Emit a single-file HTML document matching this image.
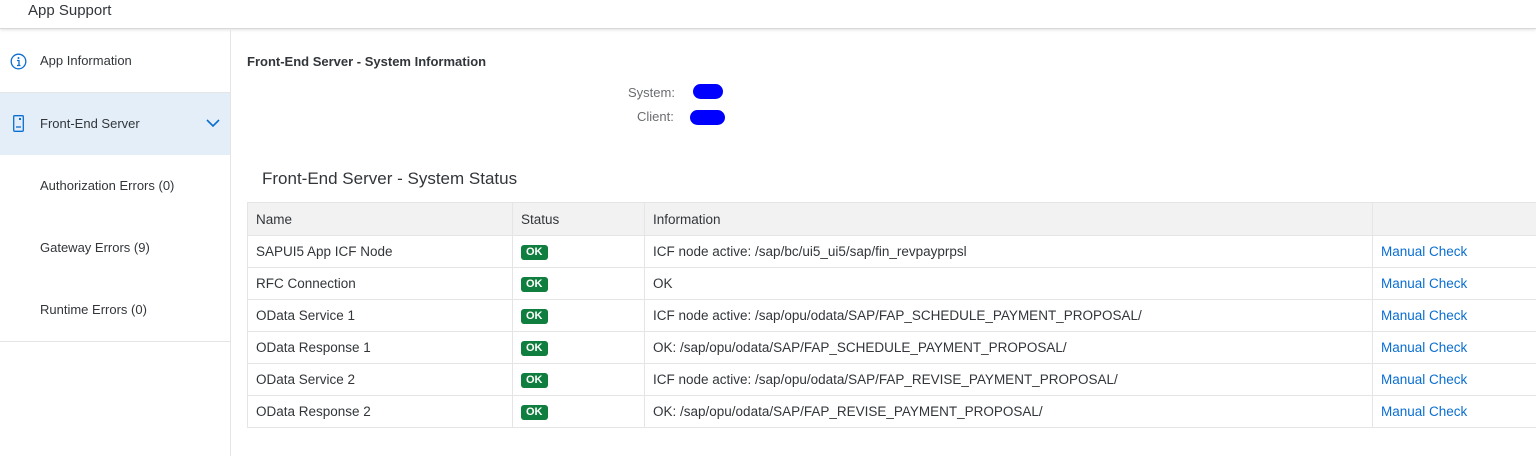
<!DOCTYPE html>
<html><head><style>
*{box-sizing:border-box;margin:0;padding:0}
body{width:1536px;height:456px;overflow:hidden;background:#fff;font-family:"Liberation Sans",sans-serif;color:#32363a;position:relative}
.hdr{position:absolute;left:0;top:0;width:1536px;height:29px;border-bottom:1px solid #d9d9d9;box-shadow:0 1px 3px rgba(0,0,0,.12);font-size:15px;padding:2px 0 0 28px;color:#32363a}
.side{position:absolute;left:0;top:30px;width:231px;height:426px;border-right:1px solid #e5e5e5}
.it{position:absolute;left:0;width:230px;height:62px;font-size:13px;line-height:62px;padding-left:40px;color:#32363a}
.sel{background:#e4eef8}
.a{position:absolute;font-size:13px}
table{position:absolute;left:247px;top:202px;border-collapse:collapse;font-size:13.5px;table-layout:fixed;width:1400px}
td,th{border:1px solid #e5e5e5;height:32px;padding:0 8px;text-align:left;font-weight:normal;white-space:nowrap;overflow:hidden}
th{background:#f2f2f2;height:33px;color:#32363a}
.ok{display:inline-block;background:#107e3e;color:#fff;font-weight:bold;font-size:11px;border-radius:3px;padding:1px 5px;line-height:13px}
a{color:#0a6ed1;text-decoration:none}
.blob{position:absolute;background:#0000ff;border-radius:8px}
</style></head><body>
<div class="hdr">App Support</div>
<div class="side">
<div class="it" style="top:0">App Information</div>
<svg style="position:absolute;left:10px;top:23px" width="17" height="17" viewBox="0 0 17 17"><circle cx="8.5" cy="8.5" r="7.3" fill="none" stroke="#0a6ed1" stroke-width="1.3"/><circle cx="8.5" cy="5" r="1" fill="#0a6ed1"/><path d="M7 7.5h2v5M7 12.5h3.5" stroke="#0a6ed1" stroke-width="1.3" fill="none"/></svg>
<div class="it sel" style="top:62px;border-top:1px solid #e5e5e5;height:63px">Front-End Server</div>
<svg style="position:absolute;left:13px;top:85px" width="11" height="17" viewBox="0 0 11 17"><rect x="0.7" y="0.7" width="9.6" height="15.6" rx="1" fill="none" stroke="#0a6ed1" stroke-width="1.3"/><rect x="6" y="3" width="2" height="2" fill="#0a6ed1"/><path d="M3 12h5" stroke="#0a6ed1" stroke-width="1.3"/></svg>
<svg style="position:absolute;left:206px;top:89px" width="14" height="9" viewBox="0 0 14 9"><path d="M1 1l6 6 6-6" stroke="#0a6ed1" stroke-width="1.6" fill="none"/></svg>
<div class="it" style="top:125px">Authorization Errors (0)</div>
<div class="it" style="top:187px">Gateway Errors (9)</div>
<div class="it" style="top:249px">Runtime Errors (0)</div>
<div style="position:absolute;left:0;top:311px;width:230px;border-top:1px solid #e5e5e5"></div>
</div>
<div class="a" style="left:247px;top:54px;font-weight:bold;color:#32363a">Front-End Server - System Information</div>
<div class="a" style="left:628px;top:85px;color:#6a6d70">System:</div>
<div class="a" style="left:637px;top:109px;color:#6a6d70">Client:</div>
<div class="blob" style="left:693px;top:84px;width:30px;height:15px"></div>
<div class="blob" style="left:690px;top:110px;width:35px;height:15px"></div>
<div class="a" style="left:262px;top:169px;font-size:17px;color:#32363a">Front-End Server - System Status</div>
<table>
<colgroup><col style="width:265px"><col style="width:132px"><col style="width:728px"><col></colgroup>
<tr><th>Name</th><th>Status</th><th>Information</th><th></th></tr>
<tr><td>SAPUI5 App ICF Node</td><td><span class="ok">OK</span></td><td>ICF node active: /sap/bc/ui5_ui5/sap/fin_revpayprpsl</td><td><a>Manual Check</a></td></tr>
<tr><td>RFC Connection</td><td><span class="ok">OK</span></td><td>OK</td><td><a>Manual Check</a></td></tr>
<tr><td>OData Service 1</td><td><span class="ok">OK</span></td><td>ICF node active: /sap/opu/odata/SAP/FAP_SCHEDULE_PAYMENT_PROPOSAL/</td><td><a>Manual Check</a></td></tr>
<tr><td>OData Response 1</td><td><span class="ok">OK</span></td><td>OK: /sap/opu/odata/SAP/FAP_SCHEDULE_PAYMENT_PROPOSAL/</td><td><a>Manual Check</a></td></tr>
<tr><td>OData Service 2</td><td><span class="ok">OK</span></td><td>ICF node active: /sap/opu/odata/SAP/FAP_REVISE_PAYMENT_PROPOSAL/</td><td><a>Manual Check</a></td></tr>
<tr><td>OData Response 2</td><td><span class="ok">OK</span></td><td>OK: /sap/opu/odata/SAP/FAP_REVISE_PAYMENT_PROPOSAL/</td><td><a>Manual Check</a></td></tr>
</table>
</body></html>
